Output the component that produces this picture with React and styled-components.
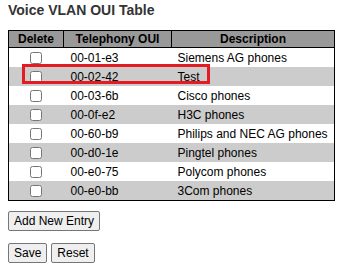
import React from "react";
import styled, { createGlobalStyle } from "styled-components";

const Global = createGlobalStyle`
  html, body { margin: 0; padding: 0; background: #fff; }
  body { font-family: "Liberation Sans", Arial, sans-serif; font-size: 12px; color: #000; }
`;

const Page = styled.div`
  padding: 2px 8px 0 8px;
`;

const Title = styled.h1`
  margin: 0 0 11px 0;
  font-size: 14px;
  line-height: 17px;
  font-weight: bold;
  color: #333;
`;

const TableWrap = styled.div`
  position: relative;
  display: inline-block;
`;

const Table = styled.table`
  border-collapse: collapse;
  border: 1px solid #000;
  width: 327px;
`;

const Th = styled.th`
  background: #999;
  border: 1px solid #000;
  font-weight: bold;
  font-size: 12px;
  height: 16px;
  padding: 0 4px;
  text-align: center;
  width: ${(p) => p.$w || "auto"};
`;

const Tr = styled.tr`
  background: ${(p) => (p.$even ? "#ccc" : "#fff")};
`;

const Td = styled.td`
  height: 19px;
  padding: 0 ${(p) => p.$pad || "6px"};
  text-align: ${(p) => p.$align || "left"};
  vertical-align: middle;
  white-space: nowrap;
  line-height: 14px;
`;

const Check = styled.input.attrs({ type: "checkbox" })`
  margin: 0;
  width: 12px;
  height: 12px;
  vertical-align: middle;
  accent-color: #999;
`;

const Highlight = styled.div`
  position: absolute;
  left: 14px;
  top: 34px;
  width: 182px;
  height: 14px;
  border: 3px solid #e31b23;
  pointer-events: none;
`;

const ButtonRow = styled.div`
  display: flex;
  gap: 4px;
  margin-top: ${(p) => p.$mt || "10px"};
`;

const Button = styled.button`
  font-family: "Liberation Sans", Arial, sans-serif;
  font-size: 12px;
  color: #000;
  background: #efefef;
  border: 1px solid #767676;
  border-radius: 2px;
  padding: 0 5px;
  height: 20px;
  line-height: 18px;
`;

const rows = [
  ["00-01-e3", "Siemens AG phones"],
  ["00-02-42", "Test"],
  ["00-03-6b", "Cisco phones"],
  ["00-0f-e2", "H3C phones"],
  ["00-60-b9", "Philips and NEC AG phones"],
  ["00-d0-1e", "Pingtel phones"],
  ["00-e0-75", "Polycom phones"],
  ["00-e0-bb", "3Com phones"],
];

export default function App() {
  return (
    <Page>
      <Global />
      <Title>Voice VLAN OUI Table</Title>
      <TableWrap>
        <Table>
          <thead>
            <tr>
              <Th $w="46px">Delete</Th>
              <Th $w="99px">Telephony OUI</Th>
              <Th>Description</Th>
            </tr>
          </thead>
          <tbody>
            {rows.map(([oui, desc], i) => (
              <Tr key={oui} $even={i % 2 === 1}>
                <Td $align="center">
                  <Check />
                </Td>
                <Td $pad="7px">{oui}</Td>
                <Td $pad="6px">{desc}</Td>
              </Tr>
            ))}
          </tbody>
        </Table>
        <Highlight />
      </TableWrap>
      <ButtonRow $mt="7px">
        <Button>Add New Entry</Button>
      </ButtonRow>
      <ButtonRow $mt="12px">
        <Button>Save</Button>
        <Button>Reset</Button>
      </ButtonRow>
    </Page>
  );
}
